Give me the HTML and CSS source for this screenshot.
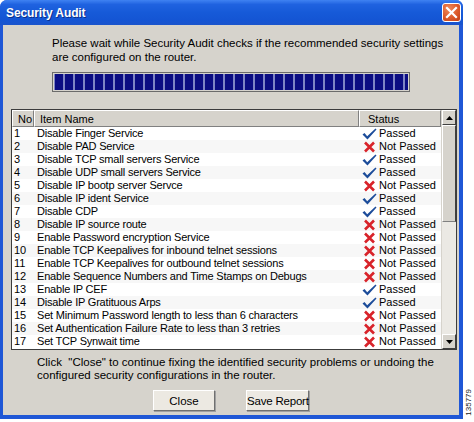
FILE: index.html
```html
<!DOCTYPE html>
<html>
<head>
<meta charset="utf-8">
<link rel="stylesheet" href="styles.css">
</head>
<body>
<div class="page">
  <div class="window">
    <div class="titlebar">
      <span class="title">Security Audit</span>
      <span class="closebtn"><svg width="13" height="13" viewBox="0 0 13 13"><path d="M2 2 L11 11 M11 2 L2 11" stroke="#fff" stroke-width="2.2" stroke-linecap="square"/></svg></span>
    </div>
    <div class="client">
      <p class="intro">Please wait while Security Audit checks if the recommended security settings<br>are configured on the router.</p>
      <div class="progress"><div class="fill"></div></div>
      <div class="listbox">
        <div class="table">
          <div class="head">
            <div class="hc no">No</div>
            <div class="hc name">Item Name</div>
            <div class="hc status">Status</div>
          </div>
          <div class="rows" id="rows"></div>
        </div>
        <div class="scrollbar">
          <div class="sbtn"><svg width="7" height="4" viewBox="0 0 7 4"><path d="M3.5 0 L7 4 L0 4Z" fill="#000"/></svg></div>
          <div class="track"><div class="thumb"></div></div>
          <div class="sbtn"><svg width="7" height="4" viewBox="0 0 7 4"><path d="M0 0 L7 0 L3.5 4Z" fill="#000"/></svg></div>
        </div>
      </div>
      <p class="note">Click &nbsp;"Close" to continue fixing the identified security problems or undoing the<br>configured security configurations in the router.</p>
      <div class="buttons">
        <button class="btn close">Close</button>
        <button class="btn save">Save Report</button>
      </div>
    </div>
  </div>
  <div class="side"><span class="fignum">135779</span></div>
</div>
<script src="app.js"></script>
</body>
</html>
```

FILE: app.js
```js
var items = [
  ["Disable Finger Service", 1],
  ["Disable PAD Service", 0],
  ["Disable TCP small servers Service", 1],
  ["Disable UDP small servers Service", 1],
  ["Disable IP bootp server Servce", 0],
  ["Disable IP ident Service", 1],
  ["Disable CDP", 1],
  ["Disable IP source route", 0],
  ["Enable Password encryption Service", 0],
  ["Enable TCP Keepalives for inbound telnet sessions", 0],
  ["Enable TCP Keepalives for outbound telnet sessions", 0],
  ["Enable Sequence Numbers and Time Stamps on Debugs", 0],
  ["Enable IP CEF", 1],
  ["Disable IP Gratituous Arps", 1],
  ["Set Minimum Password length to less than 6 characters", 0],
  ["Set Authentication Failure Rate to less than 3 retries", 0],
  ["Set TCP Synwait time", 0]
];
var check = '<svg class="ico" width="15" height="12" viewBox="0 0 15 12"><path d="M0.5 6.5 L2.5 5 L5.2 8.2 L13.5 0.5 L14.5 1.5 L5.5 11.5 Z" fill="#1c4c9a"/></svg>';
var cross = '<svg class="ico" width="15" height="12" viewBox="0 0 15 12"><path d="M3 1.5 L12 10.5 M12 1.5 L3 10.5" stroke="#d8232a" stroke-width="2.6"/></svg>';
var html = "";
for (var i = 0; i < items.length; i++) {
  var ok = items[i][1];
  html += '<div class="row"><div class="c no">' + (i + 1) + '</div><div class="c name">' + items[i][0] +
    '</div><div class="c status">' + (ok ? check + '<span>Passed</span>' : cross + '<span>Not Passed</span>') + '</div></div>';
}
document.getElementById("rows").innerHTML = html;
```

FILE: styles.css
```css
html, body {
  margin: 0;
  padding: 0;
  background: #fff;
}
body {
  font-family: "Liberation Sans", Arial, sans-serif;
  color: #000;
}
.page {
  display: flex;
  width: 474px;
  height: 422px;
}
.window {
  width: 463px;
  height: 419px;
  box-sizing: border-box;
  display: flex;
  flex-direction: column;
  background: #1f57d6;
  border-radius: 7px 7px 0 0;
  padding: 0 4px 4px 3px;
}
.titlebar {
  height: 25px;
  flex: none;
  margin: 0 -4px 0 -3px;
  border-radius: 7px 7px 0 0;
  background: linear-gradient(#3f82f2 0%, #1f62e0 18%, #165ad8 50%, #1455d4 80%, #1a54cc 100%);
  display: flex;
  align-items: center;
  justify-content: space-between;
  padding: 0 2px 0 6px;
}
.title {
  color: #fff;
  font-weight: bold;
  font-size: 12px;
  letter-spacing: -0.1px;
  text-shadow: 1px 1px 0 #0b2f8a;
}
.closebtn {
  width: 19px;
  height: 19px;
  box-sizing: border-box;
  border: 1px solid #fff;
  border-radius: 3px;
  background: radial-gradient(circle at 35% 30%, #f08a5c 0%, #dc5a2a 55%, #c13e14 100%);
  display: flex;
  align-items: center;
  justify-content: center;
}
.client {
  flex: 1;
  background: #d6d3cc;
  display: flex;
  flex-direction: column;
}
.intro {
  margin: 11px 0 0 49px;
  font-size: 11.5px;
  line-height: 14px;
}
.progress {
  margin: 8px 0 0 49px;
  width: 358px;
  height: 20px;
  box-sizing: border-box;
  border: 1px solid #6b6b6b;
  background: #d6d3cc;
  padding: 1px;
}
.fill {
  height: 100%;
  background: repeating-linear-gradient(90deg, #7e84c4 0px, #7e84c4 1px, #0b0c82 1px, #0b0c82 9px, #7e84c4 9px, #7e84c4 10px);
}
.listbox {
  margin: 17px 0 0 8px;
  width: 446px;
  height: 241px;
  display: flex;
  box-sizing: border-box;
  border: 1px solid #3c3c3c;
  background: #fff;
}
.table {
  width: 429px;
  display: flex;
  flex-direction: column;
  font-size: 11px;
}
.head {
  display: grid;
  grid-template-columns: 22px 325px 82px;
  height: 17px;
  background: #d6d3cc;
}
.hc {
  box-sizing: border-box;
  border-right: 1px solid #808080;
  border-bottom: 1px solid #808080;
  border-left: 1px solid #fff;
  border-top: 1px solid #fff;
  display: flex;
  align-items: center;
  white-space: nowrap;
  overflow: hidden;
}
.hc.no { padding-left: 5px; }
.hc.name { padding-left: 5px; }
.hc.status { padding-left: 8px; }
.rows {
  flex: 1;
}
.row {
  display: grid;
  grid-template-columns: 22px 325px 82px;
  height: 13px;
  align-items: center;
}
.row:nth-child(even) {
  background: #f7f7f7;
}
.c {
  white-space: nowrap;
  overflow: hidden;
  line-height: 13px;
}
.c.no { padding-left: 2px; }
.c.name {
  padding-left: 3px;
  letter-spacing: -0.2px;
}
.c.status {
  display: flex;
  align-items: center;
  padding-left: 3px;
}
.ico {
  flex: none;
  margin-right: 2px;
}
.scrollbar {
  flex: 1;
  display: flex;
  flex-direction: column;
  background: #d6d3cc;
  border-left: 1px solid #d6d3cc;
}
.sbtn {
  height: 15px;
  box-sizing: border-box;
  border-top: 1px solid #fff;
  border-left: 1px solid #fff;
  border-right: 1px solid #404040;
  border-bottom: 1px solid #404040;
  background: #d6d3cc;
  display: flex;
  align-items: center;
  justify-content: center;
}
.track {
  flex: 1;
  background: #ebe9e4;
}
.thumb {
  height: 97px;
  box-sizing: border-box;
  border-top: 1px solid #fff;
  border-left: 1px solid #fff;
  border-right: 1px solid #404040;
  border-bottom: 1px solid #808080;
  background: #d6d3cc;
}
.note {
  margin: 6px 0 0 34px;
  font-size: 11.5px;
  line-height: 13px;
}
.buttons {
  display: flex;
  justify-content: center;
  gap: 31px;
  margin-top: 8px;
}
.btn {
  height: 21px;
  box-sizing: border-box;
  padding: 0;
  white-space: nowrap;
  font-family: "Liberation Sans", Arial, sans-serif;
  font-size: 11.5px;
  color: #000;
  background: #ece9e2;
  border-top: 1px solid #fff;
  border-left: 1px solid #fff;
  border-right: 1px solid #707070;
  border-bottom: 1px solid #707070;
  box-shadow: 1px 1px 0 #a0a0a0;
}
.btn.close { width: 62px; }
.btn.save { width: 63px; letter-spacing: -0.2px; }
.side {
  flex: 1;
  display: flex;
  align-items: flex-end;
  justify-content: center;
  padding-bottom: 6px;
}
.fignum {
  writing-mode: vertical-rl;
  transform: rotate(180deg);
  font-size: 8px;
  font-family: "Liberation Sans", Arial, sans-serif;
  color: #222;
}
```
